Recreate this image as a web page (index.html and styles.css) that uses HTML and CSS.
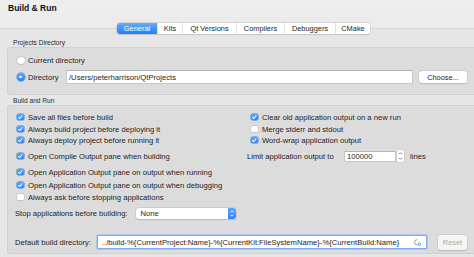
FILE: index.html
```html
<!DOCTYPE html>
<html>
<head>
<meta charset="utf-8">
<link rel="stylesheet" href="styles.css">
</head>
<body>
<div class="window">
  <header class="titlebar"><h1 class="title">Build &amp; Run</h1></header>
  <nav class="tabs">
    <span class="tab tab-active w-general">General</span>
    <span class="tab w-kits">Kits</span>
    <span class="tab w-qt">Qt Versions</span>
    <span class="tab w-comp">Compilers</span>
    <span class="tab w-dbg">Debuggers</span>
    <span class="tab w-cmake">CMake</span>
  </nav>
  <section class="pane">
    <div class="group-label">Projects Directory</div>
    <div class="group group-dir">
      <div class="row row-radio">
        <span class="radio"></span><span>Current directory</span>
      </div>
      <div class="row row-dir">
        <span class="radio radio-on"><span class="dot"></span></span><span class="dir-label">Directory</span>
        <div class="field field-dir">/Users/peterharrison/QtProjects</div>
        <button class="btn btn-choose">Choose...</button>
      </div>
    </div>

    <div class="group-label label-build">Build and Run</div>
    <div class="group group-build">
      <div class="grid">
        <div class="row"><span class="check on"><svg viewBox="0 0 7 7" width="6.5" height="6.5"><path d="M1.6 3.7 L2.9 5 L5.4 1.9" fill="none" stroke="#fff" stroke-width="1.1" stroke-linecap="round" stroke-linejoin="round"/></svg></span>Save all files before build</div>
        <div class="row"><span class="check on"><svg viewBox="0 0 7 7" width="6.5" height="6.5"><path d="M1.6 3.7 L2.9 5 L5.4 1.9" fill="none" stroke="#fff" stroke-width="1.1" stroke-linecap="round" stroke-linejoin="round"/></svg></span>Clear old application output on a new run</div>
        <div class="row"><span class="check on"><svg viewBox="0 0 7 7" width="6.5" height="6.5"><path d="M1.6 3.7 L2.9 5 L5.4 1.9" fill="none" stroke="#fff" stroke-width="1.1" stroke-linecap="round" stroke-linejoin="round"/></svg></span>Always build project before deploying it</div>
        <div class="row"><span class="check"></span>Merge stderr and stdout</div>
        <div class="row"><span class="check on"><svg viewBox="0 0 7 7" width="6.5" height="6.5"><path d="M1.6 3.7 L2.9 5 L5.4 1.9" fill="none" stroke="#fff" stroke-width="1.1" stroke-linecap="round" stroke-linejoin="round"/></svg></span>Always deploy project before running it</div>
        <div class="row"><span class="check on"><svg viewBox="0 0 7 7" width="6.5" height="6.5"><path d="M1.6 3.7 L2.9 5 L5.4 1.9" fill="none" stroke="#fff" stroke-width="1.1" stroke-linecap="round" stroke-linejoin="round"/></svg></span>Word-wrap application output</div>
        <div class="row row-tall"><span class="check on"><svg viewBox="0 0 7 7" width="6.5" height="6.5"><path d="M1.6 3.7 L2.9 5 L5.4 1.9" fill="none" stroke="#fff" stroke-width="1.1" stroke-linecap="round" stroke-linejoin="round"/></svg></span>Open Compile Output pane when building</div>
        <div class="row row-tall row-limit">
          <span class="limit-label">Limit application output to</span>
          <div class="field field-limit">100000</div>
          <span class="spinner"><svg viewBox="0 0 7 12" width="7" height="12"><path d="M2 4.2 L3.5 2.7 L5 4.2 M2 7.8 L3.5 9.3 L5 7.8" fill="none" stroke="#666" stroke-width="0.8"/></svg></span>
          <span class="lines">lines</span>
        </div>
      </div>
      <div class="row r5"><span class="check on"><svg viewBox="0 0 7 7" width="6.5" height="6.5"><path d="M1.6 3.7 L2.9 5 L5.4 1.9" fill="none" stroke="#fff" stroke-width="1.1" stroke-linecap="round" stroke-linejoin="round"/></svg></span>Open Application Output pane on output when running</div>
      <div class="row r6"><span class="check on"><svg viewBox="0 0 7 7" width="6.5" height="6.5"><path d="M1.6 3.7 L2.9 5 L5.4 1.9" fill="none" stroke="#fff" stroke-width="1.1" stroke-linecap="round" stroke-linejoin="round"/></svg></span>Open Application Output pane on output when debugging</div>
      <div class="row"><span class="check"></span>Always ask before stopping applications</div>
      <div class="row r8 row-label">
        <span class="stop-label">Stop applications before building:</span>
        <div class="select">
          <span class="select-text">None</span>
          <span class="select-btn"><svg viewBox="0 0 8 11" width="8" height="11"><path d="M2.5 4.3 L4 2.8 L5.5 4.3 M2.5 6.7 L4 8.2 L5.5 6.7" fill="none" stroke="#fff" stroke-width="0.9"/></svg></span>
        </div>
      </div>
      <div class="row r9 row-label">
        <span class="build-label">Default build directory:</span>
        <div class="field field-build">
          <span class="build-text">../build-%{CurrentProject:Name}-%{CurrentKit:FileSystemName}-%{CurrentBuild:Name}</span>
          <svg class="var-icon" viewBox="0 0 9 9" width="9" height="9"><path d="M4.2 1.6 A2.6 2.6 0 1 0 4.2 6.9" fill="none" stroke="#9a9a9a" stroke-width="1"/><circle cx="6.3" cy="6.2" r="1.3" fill="none" stroke="#4a90e2" stroke-width="0.9"/></svg>
        </div>
        <button class="btn btn-reset">Reset</button>
      </div>
    </div>
  </section>
</div>
</body>
</html>
```

FILE: styles.css
```css
* { box-sizing: border-box; margin: 0; padding: 0; }
html, body { width: 474px; height: 257px; overflow: hidden; }
body {
  background: #ececec;
  font-family: "Liberation Sans", Arial, sans-serif;
  font-size: 7.65px;
  color: #1e1e1e;
}
.window { display: flex; flex-direction: column; height: 257px; }
.titlebar {
  height: 22.5px;
  padding: 4px 0 0 8px;
  background: linear-gradient(#efefef, #ebebeb);
}
.title { font-size: 8.5px; font-weight: bold; line-height: 9px; color: #111; }

.tabs {
  display: flex;
  align-self: flex-start;
  margin-left: 117px;
  height: 11.5px;
  margin-bottom: -6px;
  position: relative;
  z-index: 1;
  background: #fff;
  border-radius: 3px;
  box-shadow: 0 0 0 0.5px #c2c2c2, 0 0.5px 1px rgba(0,0,0,0.12);
  font-size: 7.4px;
}
.tab {
  display: flex;
  align-items: center;
  justify-content: center;
  border-left: 1px solid #e3e3e3;
  color: #1e1e1e;
}
.tab:first-child { border-left: none; }
.tab-active {
  background: linear-gradient(#65adf9, #1f80f4);
  color: #fff;
  border-radius: 3px 0 0 3px;
}
.w-general { width: 40px; }
.w-kits { width: 25px; }
.w-qt { width: 54px; }
.w-comp { width: 48px; }
.w-dbg { width: 51px; }
.w-cmake { width: 35px; }

.pane {
  flex: 1;
  background: #e6e6e6;
  border-top: 1px solid #d3d3d3;
  padding: 10px 0 0 7px;
}
.group-label {
  font-size: 6.6px;
  line-height: 8px;
  padding-left: 6px;
  color: #2a2a2a;
}
.label-build { margin-top: 2px; }
.group {
  background: #dcdcdc;
  border: 1px solid #d0d0d0;
  border-right: none;
  border-radius: 3px 0 0 3px;
  padding-left: 9px;
  margin-right: -10px;
}
.group-dir { padding-top: 6.5px; padding-bottom: 10px; }
.group-build { padding-top: 5px; padding-bottom: 3px; }

.row { display: flex; align-items: center; height: 12px; white-space: nowrap; }
.row-dir { height: 14px; margin-top: 3.5px; width: 450px; }

.radio {
  width: 7.5px; height: 7.5px;
  border-radius: 50%;
  background: #fff;
  box-shadow: 0 0 0 0.5px #b4b4b4, 0 0.5px 0.5px rgba(0,0,0,0.15);
  margin-right: 3.5px;
  flex: none;
  display: flex; align-items: center; justify-content: center;
}
.radio-on { background: linear-gradient(#5aa7f9, #2a86f3); box-shadow: 0 0 0 0.5px #2f7fe0; }
.dot { width: 2.6px; height: 2.6px; border-radius: 50%; background: #fff; }
.dir-label { width: 38px; flex: none; }

.field {
  background: #fff;
  border: 0.5px solid #c6c6c6;
  border-top-color: #b6b6b6;
  display: flex;
  align-items: center;
  color: #1e1e1e;
}
.field-dir { flex: 1; height: 14px; padding-left: 2px; margin-right: 6px; }
.btn {
  font-family: "Liberation Sans", Arial, sans-serif;
  font-size: 7.4px;
  background: #fff;
  border: none;
  border-radius: 3px;
  box-shadow: 0 0 0 0.5px #c4c4c4, 0 0.5px 1px rgba(0,0,0,0.18);
  color: #1e1e1e;
  flex: none;
}
.btn-choose { width: 48px; height: 12px; }

.grid {
  display: grid;
  grid-template-columns: 234px 1fr;
  grid-template-rows: 12px 11px 12px 18px;
}
.row-tall { height: 16px; align-self: end; }

.check {
  width: 6.5px; height: 6.5px;
  border-radius: 1.5px;
  background: #fff;
  box-shadow: 0 0 0 0.5px #b8b8b8, 0 0.5px 0.5px rgba(0,0,0,0.12);
  margin-right: 4.5px;
  flex: none;
  display: flex;
}
.check.on { background: linear-gradient(#5aa7f9, #2a86f3); box-shadow: 0 0 0 0.5px #2f7fe0; }

.row-limit { margin-left: -4px; }
.limit-label { width: 97px; flex: none; }
.field-limit { width: 52px; height: 11px; padding-left: 2px; }
.spinner {
  width: 7px; height: 12px; margin-left: 1px;
  background: #fff; border-radius: 2px;
  box-shadow: 0 0 0 0.5px #c4c4c4;
  display: flex;
}
.lines { margin-left: 6px; }

.r5 { margin-top: 2px; }
.r6 { margin-top: 1px; }
.r8 { margin-top: 3px; height: 14px; }
.r9 { margin-top: 14px; height: 16px; }
.row-label { margin-left: -2px; }

.stop-label { width: 121px; flex: none; }
.select {
  width: 100px; height: 11px;
  display: flex;
  background: #fff;
  border-radius: 3px;
  box-shadow: 0 0 0 0.5px #bdbdbd, 0 0.5px 1px rgba(0,0,0,0.18);
}
.select-text { flex: 1; padding-left: 4.5px; display: flex; align-items: center; }
.select-btn {
  width: 8px;
  background: linear-gradient(#5aa7f9, #2a86f3);
  border-radius: 0 3px 3px 0;
  display: flex;
}

.build-label { width: 82px; flex: none; }
.field-build {
  width: 330px; height: 14px;
  padding-left: 4px; padding-right: 4px;
  border: 1px solid #7eaef0;
  box-shadow: 0 0 0 1px #a9c9f4;
  border-radius: 1px;
}
.build-text { flex: 1; overflow: hidden; }
.var-icon { flex: none; }
.btn-reset {
  width: 29px; height: 15px;
  margin-left: 11px;
  color: #a8a8a8;
  background: #f5f5f5;
}
```
